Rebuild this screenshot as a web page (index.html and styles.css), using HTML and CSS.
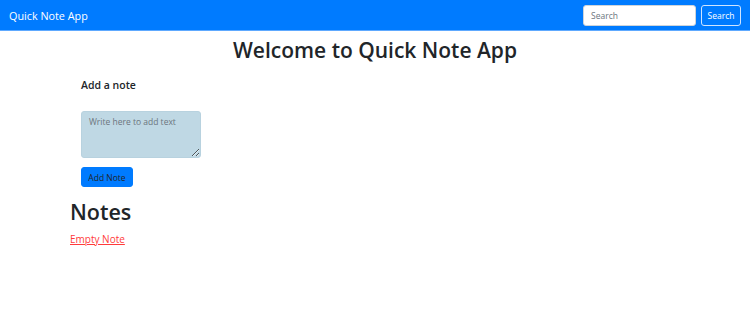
FILE: index.html
```html
<!DOCTYPE html>
<html>
<head>
<meta charset="utf-8">
<link rel="stylesheet" href="styles.css">
</head>
<body>
<nav class="navbar">
  <span class="brand">Quick Note App</span>
  <form class="search">
    <input class="search-input" type="text" placeholder="Search">
    <button class="search-btn" type="button">Search</button>
  </form>
</nav>
<main class="main">
  <h1 class="title">Welcome to Quick Note App</h1>
  <section class="add">
    <h5 class="add-title">Add a note</h5>
    <textarea class="note-input" placeholder="Write here to add text"></textarea>
    <button class="add-btn" type="button">Add Note</button>
  </section>
  <h2 class="notes-title">Notes</h2>
  <a class="empty" href="#">Empty Note</a>
</main>
</body>
</html>
```
FILE: styles.css
```css
* { box-sizing: border-box; }
body {
  margin: 0;
  font-family: "Open Sans", "Noto Sans", sans-serif;
  color: #212529;
  background: #fff;
}
.navbar {
  height: 31px;
  background: #007bff;
  border-bottom: 1px solid #5ea9ff;
  display: flex;
  align-items: center;
  justify-content: space-between;
  padding: 0 9px 0 9px;
}
.brand {
  color: #fff;
  font-size: 10.8px;
}
.search {
  display: flex;
  gap: 5px;
  margin: 0;
}
.search-input {
  width: 113px;
  height: 21px;
  border: 1px solid #ced4da;
  border-radius: 3px;
  font-family: inherit;
  font-size: 8.5px;
  padding: 0 7px;
  outline: none;
}
.search-input::placeholder { color: #6c757d; }
.search-btn {
  width: 40px;
  height: 21px;
  background: transparent;
  border: 1px solid #cfe4ff;
  border-radius: 3px;
  color: #fff;
  font-family: inherit;
  font-size: 8.5px;
  padding: 0;
}
.main {
  padding: 0 70px;
}
.title {
  margin: 5px 0 0;
  text-align: center;
  font-size: 21px;
  font-weight: 600;
  line-height: 28px;
}
.add {
  padding-left: 11px;
  display: flex;
  flex-direction: column;
  align-items: flex-start;
}
.add-title {
  margin: 14px 0 0;
  font-size: 10.5px;
  font-weight: 600;
  line-height: 14px;
}
.note-input {
  margin-top: 19px;
  width: 120px;
  height: 47px;
  background: #bfd8e4;
  border: 1px solid #b8d2df;
  border-radius: 3px;
  font-family: inherit;
  font-size: 8.5px;
  padding: 4px 7px;
  resize: vertical;
}
.note-input::placeholder { color: #6c757d; }
.add-btn {
  margin-top: 9px;
  width: 52px;
  height: 20px;
  background: #007bff;
  border: 1px solid #007bff;
  border-radius: 3px;
  color: #212529;
  font-family: inherit;
  font-size: 8.5px;
  padding: 0;
}
.notes-title {
  margin: 11px 0 0;
  font-size: 21.5px;
  font-weight: 600;
  line-height: 28px;
}
.empty {
  display: inline-block;
  margin-top: 1px;
  color: #ff3b3b;
  font-size: 10px;
}
```
